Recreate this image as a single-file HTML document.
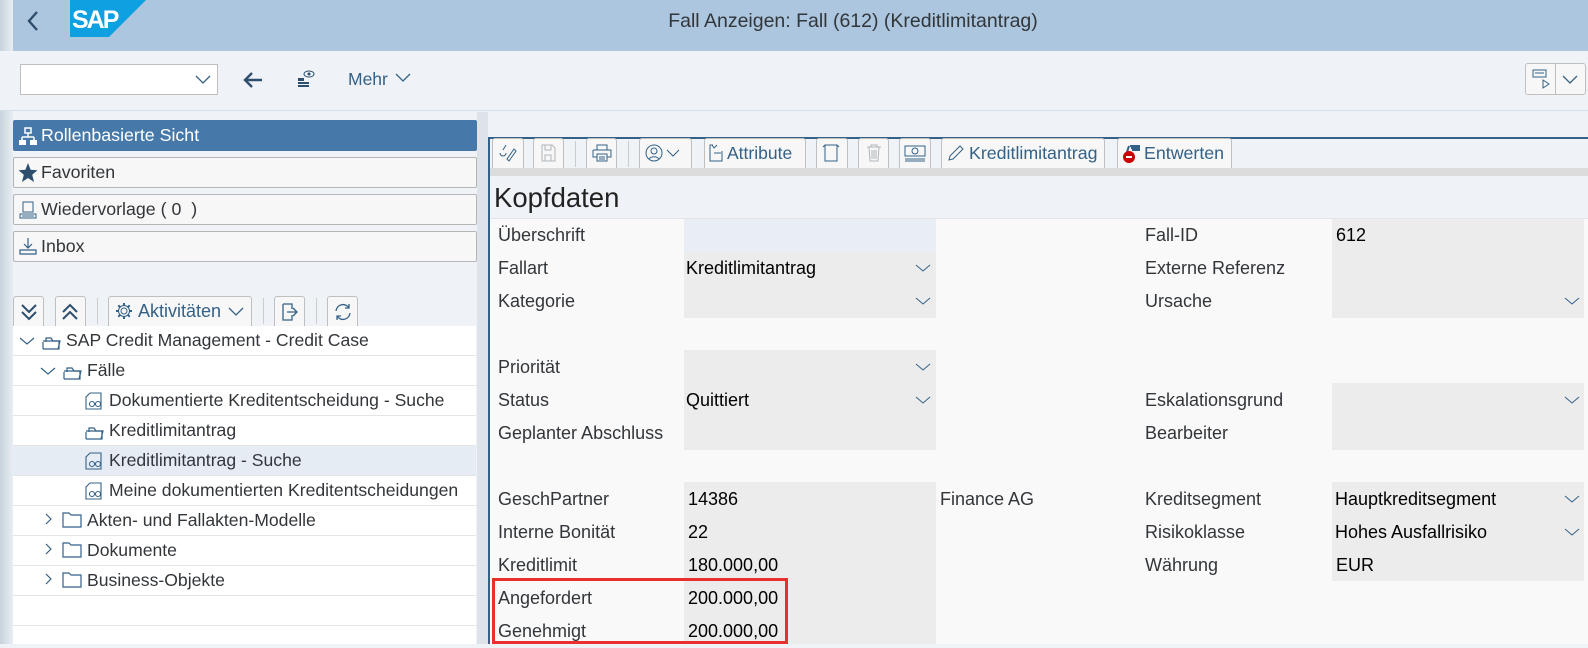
<!DOCTYPE html>
<html><head><meta charset="utf-8"><style>
*{box-sizing:border-box;margin:0;padding:0}
body{width:1588px;height:644px;overflow:hidden;background:#eff3f7;font-family:"Liberation Sans",Arial,sans-serif;position:relative;color:#32363a}
.a{position:absolute}
.hdr{left:0;top:0;width:1588px;height:51px;background:#abc6de}
.tb{left:0;top:51px;width:1588px;height:60px;background:#eff3f7;border-bottom:1px solid #d5dfe9}
.lbtn{position:absolute;left:13px;width:464px;height:31px;border:1px solid #b5b5b5;border-radius:2px;background:#f7f7f7;font-size:17.8px;line-height:29px;padding-left:27px;color:#32363a}
.tbb{position:absolute;top:296px;height:31px;border:1px solid #bfbfbf;border-bottom:none;border-radius:3px 3px 0 0;background:#f7f7f7}
.tree{left:13px;top:326px;width:463px;height:318px;background:#fff}
.row{position:absolute;left:0;width:463px;height:30px;border-bottom:1px solid #e5e5e5;font-size:17.6px;line-height:29px;color:#32363a}
.rb{position:absolute;top:138px;height:30px;border:1px solid #bfbfbf;border-bottom:none;border-radius:3px 3px 0 0;background:#f7f7f7;font-size:17.5px;line-height:28px;color:#346187}
.lab{position:absolute;font-size:18px;color:#32363a;height:33px;line-height:33px}
.inp{position:absolute;background:#ececec}
.val{position:absolute;font-size:18px;color:#000;line-height:33px}
</style></head><body>
<div class="a hdr"></div>
<div class="a" style="left:0;top:0;width:13px;height:644px;background:linear-gradient(90deg,#c8d2dc,#e8eef3)"></div>
<svg class="a" style="left:25px;top:10px" width="16" height="22"><path d="M12 2 L4 11 L12 20" stroke="#2e4e6e" stroke-width="2.4" fill="none"/></svg>
<svg class="a" style="left:70px;top:0" width="76" height="37"><path d="M0 0 H76 L39 37 H0 Z" fill="#0fa0e2"/><text x="2" y="28" font-family="Liberation Sans" font-weight="bold" font-size="25" fill="#fff" letter-spacing="-2">SAP</text></svg>
<div class="a" style="left:0;top:9px;width:1706px;text-align:center;font-size:19.5px;color:#32363a;line-height:24px">Fall Anzeigen: Fall (612) (Kreditlimitantrag)</div>
<div class="a tb"></div>
<div class="a" style="left:20px;top:64px;width:198px;height:31px;background:#fff;border:1px solid #bfbfbf"></div>
<svg class="a" style="left:195px;top:75px" width="16" height="10"><path d="M1 1 L8 8 L15 1" stroke="#346187" stroke-width="1.3" fill="none"/></svg>
<svg class="a" style="left:242px;top:71px" width="22" height="18"><path d="M20 9 H3 M10 2 L3 9 L10 16" stroke="#2e4e6e" stroke-width="2.4" fill="none"/></svg>
<svg class="a" style="left:294px;top:70px" width="22" height="20"><rect x="4" y="8" width="6" height="3" fill="#2e4e6e"/><rect x="4" y="12" width="11" height="2" fill="#2e4e6e"/><rect x="4" y="15" width="11" height="2" fill="#2e4e6e"/><ellipse cx="15" cy="4" rx="5" ry="3" stroke="#2e4e6e" fill="none"/><circle cx="15" cy="4" r="1.5" fill="#2e4e6e"/></svg>
<div class="a" style="left:348px;top:69px;font-size:17.5px;color:#346187">Mehr</div>
<svg class="a" style="left:395px;top:73px" width="16" height="10"><path d="M1 1 L8 8 L15 1" stroke="#346187" stroke-width="1.3" fill="none"/></svg>
<div class="a" style="left:1525px;top:63px;width:61px;height:32px;border:1px solid #bfbfbf;border-radius:3px;background:#f7f7f7"></div>
<div class="a" style="left:1555px;top:64px;width:1px;height:30px;background:#bfbfbf"></div>
<svg class="a" style="left:1531px;top:68px" width="22" height="22"><rect x="2" y="2" width="13" height="7" stroke="#346187" fill="none"/><path d="M4 5h9" stroke="#346187"/><path d="M12 12 L18 16 L12 20 Z" stroke="#346187" fill="none"/></svg>
<svg class="a" style="left:1562px;top:75px" width="16" height="10"><path d="M1 1 L8 8 L15 1" stroke="#346187" stroke-width="1.3" fill="none"/></svg>

<div class="lbtn" style="top:120px;background:#4679aa;border-color:#4679aa;color:#fff">Rollenbasierte Sicht</div>
<svg class="a" style="left:19px;top:127px" width="18" height="18"><rect x="6" y="1" width="6" height="5" stroke="#fff" fill="none" stroke-width="1.5"/><path d="M9 6v4M3 10h12M3 10v3M15 10v3" stroke="#fff" stroke-width="1.5"/><rect x="0" y="13" width="7" height="5" fill="#fff"/><rect x="11" y="13" width="7" height="5" fill="#fff"/></svg>
<div class="lbtn" style="top:157px">Favoriten</div>
<svg class="a" style="left:18px;top:163px" width="20" height="19"><path d="M10 0 L12.6 6.8 L19.5 7.2 L14.2 11.8 L16 19 L10 15 L4 19 L5.8 11.8 L0.5 7.2 L7.4 6.8 Z" fill="#2e4e6e"/></svg>
<div class="lbtn" style="top:194px">Wiedervorlage ( 0&nbsp; )</div>
<svg class="a" style="left:19px;top:200px" width="18" height="20"><rect x="4" y="2" width="10" height="10" stroke="#346187" fill="none"/><path d="M1 14h16v4H1z M3 16h12" stroke="#346187" fill="none"/></svg>
<div class="lbtn" style="top:231px">Inbox</div>
<svg class="a" style="left:19px;top:237px" width="18" height="20"><path d="M9 1v10M5 7l4 4 4-4M1 13h16v4H1z" stroke="#346187" fill="none" stroke-width="1.2"/></svg>

<div class="tbb" style="left:13px;width:31px"></div>
<svg class="a" style="left:20px;top:303px" width="18" height="18"><path d="M2 2l7 7 7-7M2 9l7 7 7-7" stroke="#2e4e6e" stroke-width="2" fill="none"/></svg>
<div class="tbb" style="left:55px;width:31px"></div>
<svg class="a" style="left:61px;top:303px" width="18" height="18"><path d="M2 9l7-7 7 7M2 16l7-7 7 7" stroke="#2e4e6e" stroke-width="2" fill="none"/></svg>
<div class="a" style="left:97px;top:298px;width:1px;height:26px;background:#ccc"></div>
<div class="tbb" style="left:108px;width:144px;font-size:18px;line-height:29px;color:#346187;padding-left:29px">Aktivitäten</div>
<svg class="a" style="left:114px;top:301px" width="20" height="20"><circle cx="10" cy="10" r="3" stroke="#346187" fill="none"/><path d="M10 2v3M10 15v3M2 10h3M15 10h3M4.3 4.3l2.1 2.1M13.6 13.6l2.1 2.1M4.3 15.7l2.1-2.1M13.6 6.4l2.1-2.1" stroke="#346187" stroke-width="2"/><circle cx="10" cy="10" r="5.5" stroke="#346187" fill="none"/></svg>
<svg class="a" style="left:228px;top:307px" width="16" height="10"><path d="M1 1 L8 8 L15 1" stroke="#346187" stroke-width="1.3" fill="none"/></svg>
<div class="a" style="left:263px;top:298px;width:1px;height:26px;background:#ccc"></div>
<div class="tbb" style="left:274px;width:31px"></div>
<svg class="a" style="left:280px;top:303px" width="20" height="18"><path d="M3 1h9v5M3 1v16h9v-5M7 9h10M13 5l4 4-4 4" stroke="#346187" fill="none" stroke-width="1.3"/></svg>
<div class="a" style="left:316px;top:298px;width:1px;height:26px;background:#ccc"></div>
<div class="tbb" style="left:327px;width:31px"></div>
<svg class="a" style="left:333px;top:302px" width="20" height="20"><path d="M3 9a7 7 0 0 1 13-3M17 11a7 7 0 0 1-13 3M16 2v4h-4M4 18v-4h4" stroke="#346187" fill="none" stroke-width="1.3"/></svg>

<div class="a tree">
<div class="row" style="top:0;padding-left:53px">SAP Credit Management - Credit Case</div>
<div class="row" style="top:30px;padding-left:74px">Fälle</div>
<div class="row" style="top:60px;padding-left:96px">Dokumentierte Kreditentscheidung - Suche</div>
<div class="row" style="top:90px;padding-left:96px">Kreditlimitantrag</div>
<div class="row" style="top:120px;padding-left:96px;background:#e5ecf3">Kreditlimitantrag - Suche</div>
<div class="row" style="top:150px;padding-left:96px">Meine dokumentierten Kreditentscheidungen</div>
<div class="row" style="top:180px;padding-left:74px">Akten- und Fallakten-Modelle</div>
<div class="row" style="top:210px;padding-left:74px">Dokumente</div>
<div class="row" style="top:240px;padding-left:74px">Business-Objekte</div>
<div class="row" style="top:270px"></div>
</div>
<svg class="a" style="left:13px;top:326px" width="100" height="280">
<g stroke="#346187" fill="none" stroke-width="1.2">
<path d="M7 12l7 6 7-6"/><path d="M30 23h16v-8h-6l-2-3h-5v4M30 16v7"/><path d="M30 15h17l-2 8"/>
<path d="M28 42l7 6 7-6"/><path d="M51 53h16v-8h-6l-2-3h-5v4M51 46v7"/><path d="M51 45h17l-2 8"/>
<path d="M73 113h16v-8h-6l-2-3h-5v4M73 106v7"/><path d="M73 105h17l-2 8"/>
<path d="M33 188l5 5-5 5M33 218l5 5-5 5M33 248l5 5-5 5"/>
<path d="M50 187h6l2 2h10v12h-18z M50 217h6l2 2h10v12h-18z M50 247h6l2 2h10v12h-18z"/>
</g>
<g stroke="#346187" fill="none" stroke-width="1.1">
<path d="M73 83v-12l4-4h11v16h-15z"/><circle cx="79" cy="78" r="2.5"/><circle cx="85" cy="78" r="2.5"/>
<path d="M73 143v-12l4-4h11v16h-15z"/><circle cx="79" cy="138" r="2.5"/><circle cx="85" cy="138" r="2.5"/>
<path d="M73 173v-12l4-4h11v16h-15z"/><circle cx="79" cy="168" r="2.5"/><circle cx="85" cy="168" r="2.5"/>
</g></svg>

<div class="a" style="left:477px;top:112px;width:11px;height:532px;background:#dde3e8"></div>
<div class="a" style="left:488px;top:137px;width:1100px;height:507px;background:#eff3f7;border-left:2px solid #346187;border-top:2px solid #346187"></div>
<div class="rb" style="left:492px;width:32px"></div>
<svg class="a" style="left:497px;top:143px" width="22" height="20"><path d="M3 10a3 3 0 1 0 6 0M6 7l3-5M12 18l7-10-2-2-7 10z" stroke="#346187" fill="none"/></svg>
<div class="rb" style="left:533px;width:31px"></div>
<svg class="a" style="left:540px;top:144px" width="16" height="18"><path d="M2 1h10l3 3v13H2z M5 1v5h6V1 M5 11h6v6H5z" stroke="#b0b7bd" fill="none"/></svg>
<div class="a" style="left:575px;top:141px;width:1px;height:26px;background:#ccc"></div>
<div class="rb" style="left:586px;width:31px"></div>
<svg class="a" style="left:592px;top:144px" width="20" height="18"><path d="M5 6V1h10v5M1 6h18v7h-4M5 13H1V6M5 10h10v7H5z M7 13h6M7 15h6" stroke="#346187" fill="none"/></svg>
<div class="a" style="left:628px;top:141px;width:1px;height:26px;background:#ccc"></div>
<div class="rb" style="left:639px;width:53px"></div>
<svg class="a" style="left:645px;top:143px" width="44" height="20"><circle cx="9" cy="10" r="8" stroke="#346187" fill="none"/><circle cx="9" cy="8" r="3" stroke="#346187" fill="none"/><path d="M4 16a6 5 0 0 1 10 0" stroke="#346187" fill="none"/><path d="M22 7l6 6 6-6" stroke="#346187" fill="none"/></svg>
<div class="rb" style="left:704px;width:102px;padding-left:22px">Attribute</div>
<svg class="a" style="left:706px;top:142px" width="20" height="22"><path d="M7 3H4v16h12V9M8 11h7M6 3l2 3 3-3" stroke="#346187" fill="none"/></svg>
<div class="rb" style="left:816px;width:32px"></div>
<svg class="a" style="left:822px;top:143px" width="20" height="20"><path d="M3 2h12v16H3zM3 2l-2 2M15 2l2 2" stroke="#346187" fill="none"/></svg>
<div class="rb" style="left:858px;width:31px"></div>
<svg class="a" style="left:865px;top:143px" width="18" height="20"><path d="M2 4h14M6 4V2h6v2M4 4l1 14h8l1-14M7 7v9M9 7v9M11 7v9" stroke="#b0b7bd" fill="none"/></svg>
<div class="rb" style="left:899px;width:32px"></div>
<svg class="a" style="left:904px;top:144px" width="22" height="18"><rect x="1" y="2" width="20" height="10" stroke="#346187" fill="none"/><circle cx="11" cy="7" r="3" stroke="#346187" fill="none"/><path d="M1 15h20M1 17h20" stroke="#346187"/></svg>
<div class="rb" style="left:941px;width:164px;padding-left:27px;font-size:17.8px">Kreditlimitantrag</div>
<svg class="a" style="left:945px;top:143px" width="22" height="20"><path d="M4 17l1-4 10-10 3 3-10 10z" stroke="#346187" fill="none"/></svg>
<div class="rb" style="left:1117px;width:115px;padding-left:26px;font-size:17.8px">Entwerten</div>
<svg class="a" style="left:1121px;top:142px" width="22" height="22"><path d="M9 4h10M10 6h9M11 8h8M8 4l-2 6" stroke="#346187" stroke-width="2"/><circle cx="8" cy="15" r="6" fill="#c00"/><rect x="5" y="14" width="6" height="2" fill="#fff"/></svg>
<div class="a" style="left:490px;top:168px;width:1098px;height:8px;background:#dcdcdc"></div>
<div class="a" style="left:494px;top:181px;font-size:27.5px;color:#222;line-height:34px">Kopfdaten</div>
<div class="a" style="left:490px;top:218px;width:1098px;height:426px;background:#f9f9f9;border-top:1px solid #e4e4e4"></div>

<div class="inp" style="left:684px;top:219px;width:252px;height:33px;background:#e9eef5"></div>
<div class="inp" style="left:684px;top:252px;width:252px;height:66px"></div>
<div class="inp" style="left:684px;top:350px;width:252px;height:100px"></div>
<div class="inp" style="left:684px;top:482px;width:252px;height:162px"></div>
<div class="inp" style="left:1332px;top:219px;width:252px;height:99px"></div>
<div class="inp" style="left:1332px;top:383px;width:252px;height:67px"></div>
<div class="inp" style="left:1332px;top:482px;width:252px;height:99px"></div>

<div class="lab" style="left:498px;top:219px">Überschrift</div>
<div class="lab" style="left:498px;top:252px">Fallart</div>
<div class="lab" style="left:498px;top:285px">Kategorie</div>
<div class="lab" style="left:498px;top:351px">Priorität</div>
<div class="lab" style="left:498px;top:384px">Status</div>
<div class="lab" style="left:498px;top:417px">Geplanter Abschluss</div>
<div class="lab" style="left:498px;top:483px">GeschPartner</div>
<div class="lab" style="left:498px;top:516px">Interne Bonität</div>
<div class="lab" style="left:498px;top:549px">Kreditlimit</div>
<div class="lab" style="left:498px;top:582px">Angefordert</div>
<div class="lab" style="left:498px;top:615px">Genehmigt</div>
<div class="val" style="left:686px;top:252px">Kreditlimitantrag</div>
<div class="val" style="left:686px;top:384px">Quittiert</div>
<div class="val" style="left:688px;top:483px">14386</div>
<div class="val" style="left:688px;top:516px">22</div>
<div class="val" style="left:688px;top:549px">180.000,00</div>
<div class="val" style="left:688px;top:582px">200.000,00</div>
<div class="val" style="left:688px;top:615px">200.000,00</div>
<div class="lab" style="left:940px;top:483px">Finance AG</div>

<div class="lab" style="left:1145px;top:219px">Fall-ID</div>
<div class="lab" style="left:1145px;top:252px">Externe Referenz</div>
<div class="lab" style="left:1145px;top:285px">Ursache</div>
<div class="lab" style="left:1145px;top:384px">Eskalationsgrund</div>
<div class="lab" style="left:1145px;top:417px">Bearbeiter</div>
<div class="lab" style="left:1145px;top:483px">Kreditsegment</div>
<div class="lab" style="left:1145px;top:516px">Risikoklasse</div>
<div class="lab" style="left:1145px;top:549px">Währung</div>
<div class="val" style="left:1336px;top:219px">612</div>
<div class="val" style="left:1335px;top:483px">Hauptkreditsegment</div>
<div class="val" style="left:1335px;top:516px">Hohes Ausfallrisiko</div>
<div class="val" style="left:1336px;top:549px">EUR</div>

<svg class="a" style="left:0;top:0" width="1588" height="644">
<g stroke="#346187" fill="none" stroke-width="1">
<path d="M916 265l7 6 7-6M916 298l7 6 7-6M916 364l7 6 7-6M916 397l7 6 7-6"/>
<path d="M1565 298l7 6 7-6M1565 397l7 6 7-6M1565 496l7 6 7-6M1565 529l7 6 7-6"/>
</g>
<rect x="493.5" y="579.5" width="293" height="63" stroke="#e8302f" stroke-width="3" fill="none"/>
</svg>
</body></html>
